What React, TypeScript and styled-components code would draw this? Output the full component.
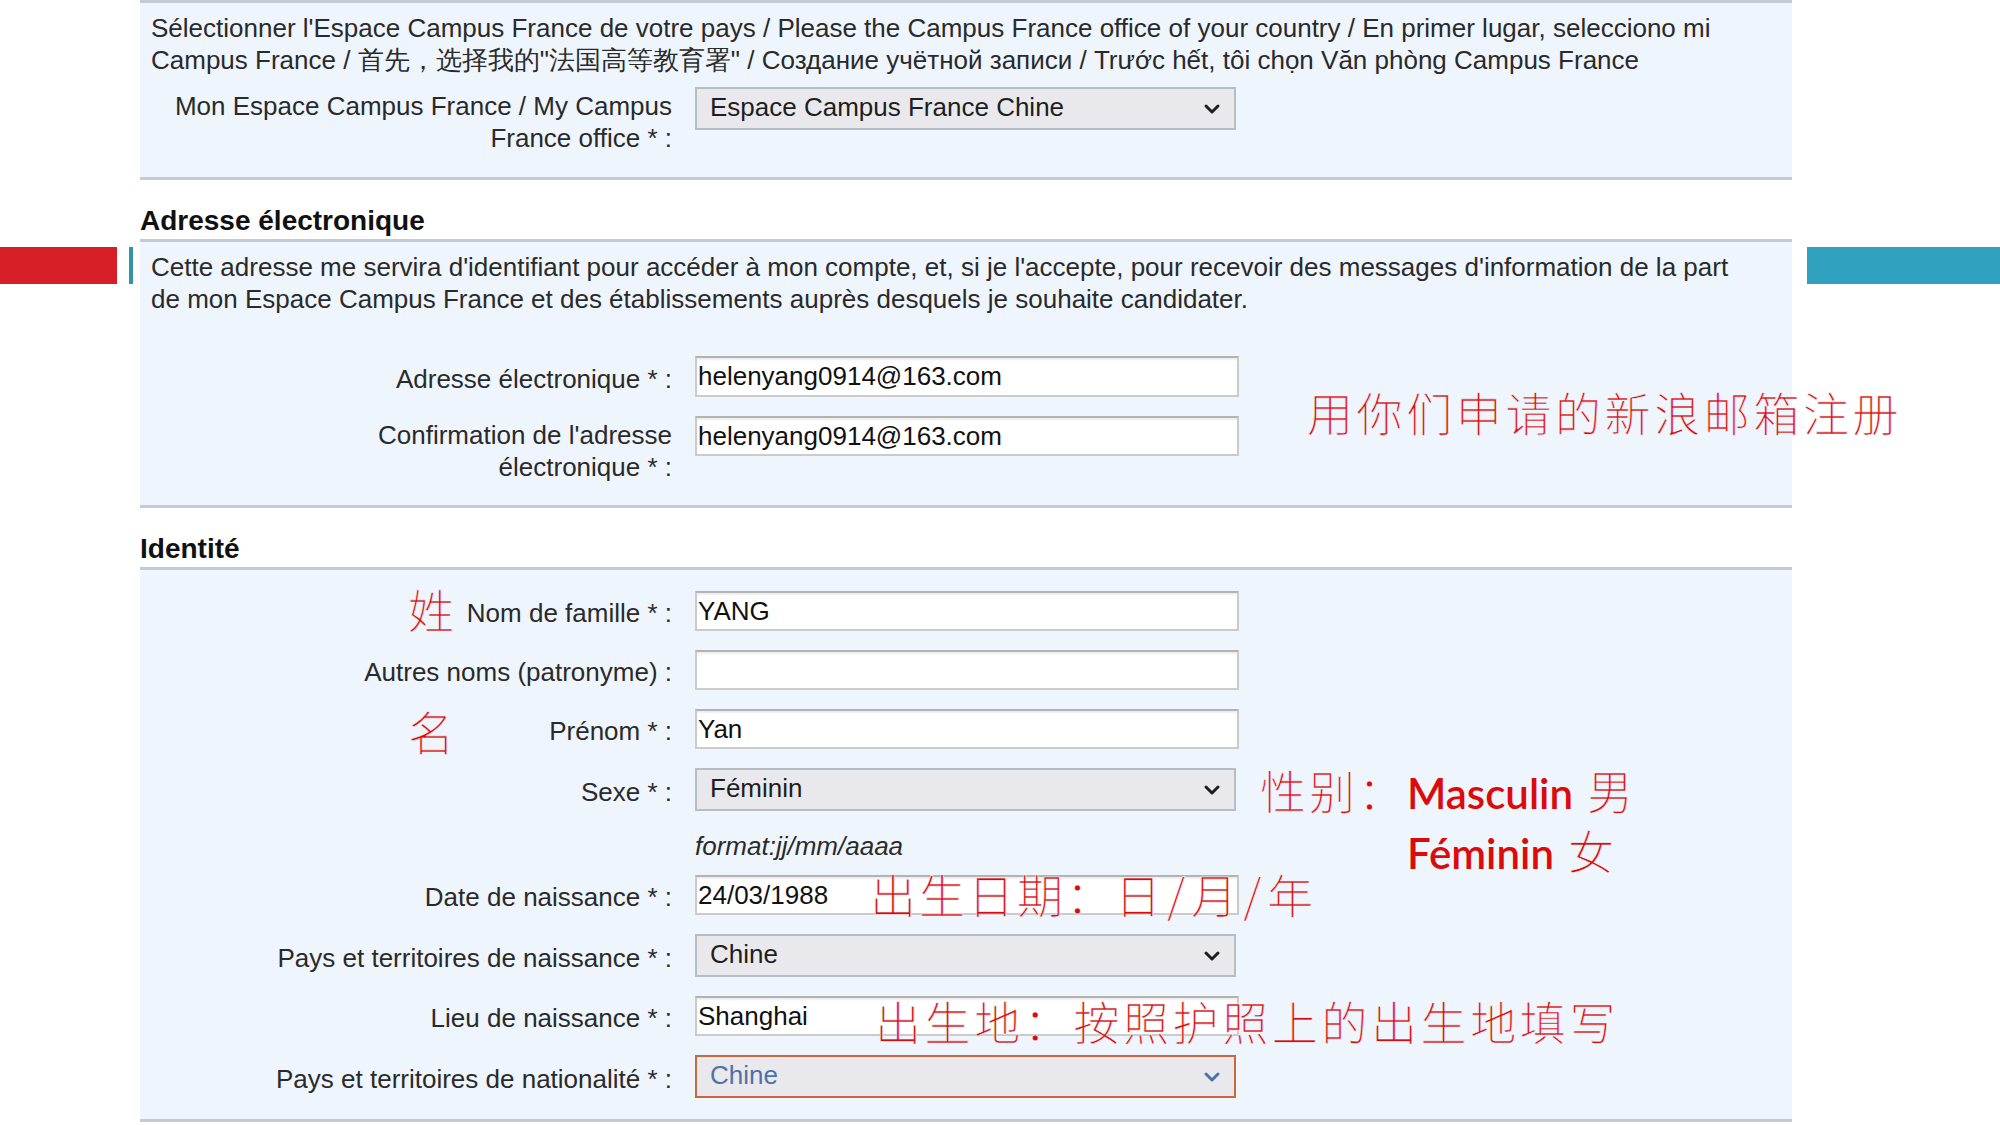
import React from 'react'
import styled, { createGlobalStyle } from 'styled-components'

const GlobalStyle = createGlobalStyle`
  html, body {
    margin: 0;
    padding: 0;
    background: #ffffff;
  }
  body {
    font-family: "Liberation Sans", Arial, sans-serif;
  }
`

const Slide = styled.div`
  position: relative;
  width: 2000px;
  height: 1125px;
  overflow: hidden;
  background: #ffffff;
`

const Form = styled.div`
  width: 1652px;
  margin-left: 140px;
  color: #2a2a2a;
  font-size: 26px;
  line-height: 32px;
`

const Panel = styled.div<{ $pt: number; $pb: number }>`
  background: #eef5fd;
  border-top: 3px solid #c3cbd5;
  border-bottom: 3px solid #c3cbd5;
  padding: ${p => p.$pt}px 0 ${p => p.$pb}px;
  display: flex;
  flex-direction: column;
`

const Intro = styled.p`
  margin: 0 0 0 11px;
  white-space: nowrap;
`

const Heading = styled.h2`
  margin: 0;
  padding: 25px 0 2px;
  font-size: 28px;
  line-height: 32px;
  font-weight: bold;
  color: #111;
`

const Row = styled.div<{ $mt?: number; $multi?: boolean }>`
  display: grid;
  grid-template-columns: 532px 1fr;
  column-gap: 23px;
  align-items: ${p => (p.$multi ? 'start' : 'center')};
  margin-top: ${p => p.$mt ?? 19}px;
`

const Label = styled.label<{ $multi?: boolean }>`
  text-align: right;
  padding-top: ${p => (p.$multi ? 3 : 4)}px;
  color: #2a2a2a;
`

const TextInput = styled.input<{ $h?: number }>`
  box-sizing: border-box;
  width: 544px;
  height: ${p => p.$h ?? 40}px;
  margin: 0;
  padding: 0 0 0 1px;
  border: 2px solid #cbcbcb;
  border-top-color: #b3b3b3;
  box-shadow: inset 0 2px 2px rgba(0, 0, 0, 0.07);
  background: #ffffff;
  font-family: "Liberation Sans", Arial, sans-serif;
  font-size: 26px;
  color: #111;
  outline: none;
`

const SelectBox = styled.div<{ $accent?: boolean }>`
  box-sizing: border-box;
  width: 541px;
  height: 43px;
  display: flex;
  align-items: center;
  justify-content: space-between;
  padding: 0 12px 3px 13px;
  background: #e9e9ed;
  border: 2px solid ${p => (p.$accent ? '#c8683e' : '#b7bdc5')};
  color: ${p => (p.$accent ? '#4d72a8' : '#1e1e1e')};
  font-size: 26px;

  svg {
    margin-top: 3px;
  }
`

const Hint = styled.div`
  grid-column: 2;
  font-style: italic;
  color: #2a2a2a;
`

const Annotation = styled.div<{ $x: number; $y: number; $ls?: number }>`
  position: absolute;
  left: ${p => p.$x}px;
  top: ${p => p.$y}px;
  transform: translateY(-50%);
  color: #dc0b0b;
  font-family: "Noto Sans CJK SC", "Noto Sans CJK JP", sans-serif;
  font-weight: 200;
  font-size: 46px;
  line-height: 1;
  letter-spacing: ${p => p.$ls ?? 3}px;
  white-space: nowrap;
  -webkit-text-stroke: 0.6px #eef5fd;
`

const Slash = styled.span`
  margin: 0 3px;
`

const Latin = styled.span`
  font-family: Lato, "Liberation Sans", sans-serif;
  font-weight: 600;
  font-size: 42px;
  letter-spacing: 0;
  margin-right: 14px;
  -webkit-text-stroke: 0;
`

const Bar = styled.div<{ $x: number; $w: number; $color: string }>`
  position: absolute;
  left: ${p => p.$x}px;
  top: 247px;
  width: ${p => p.$w}px;
  height: 37px;
  background: ${p => p.$color};
`

const Chevron: React.FC<{ color?: string }> = ({ color = '#1e1e1e' }) => (
  <svg width="20" height="14" viewBox="0 0 20 14">
    <path d="M4 4 L10 10 L16 4" fill="none" stroke={color} strokeWidth="3" strokeLinecap="round" strokeLinejoin="round" />
  </svg>
)

const Select: React.FC<{ value: string; accent?: boolean }> = ({ value, accent }) => (
  <SelectBox $accent={accent}>
    <span>{value}</span>
    <Chevron color={accent ? '#4d72a8' : '#1e1e1e'} />
  </SelectBox>
)

const Field: React.FC<{ label: React.ReactNode; multi?: boolean; mt?: number; children: React.ReactNode }> = ({ label, multi, mt, children }) => (
  <Row $multi={multi} $mt={mt}>
    <Label $multi={multi}>{label}</Label>
    <div>{children}</div>
  </Row>
)

export default function App() {
  return (
    <Slide>
      <GlobalStyle />
      <Form>
        <Panel $pt={9} $pb={23}>
          <Intro>
            Sélectionner l'Espace Campus France de votre pays / Please the Campus France office of your country / En primer lugar, selecciono mi
            <br />
            Campus France / 首先，选择我的"法国高等教育署" / Создание учётной записи / Trước hết, tôi chọn Văn phòng Campus France
          </Intro>
          <Field
            multi
            mt={11}
            label={<>Mon Espace Campus France / My Campus<br />France office * :</>}
          >
            <Select value="Espace Campus France Chine" />
          </Field>
        </Panel>

        <Heading>Adresse électronique</Heading>
        <Panel $pt={9} $pb={22}>
          <Intro>
            Cette adresse me servira d'identifiant pour accéder à mon compte, et, si je l'accepte, pour recevoir des messages d'information de la part
            <br />
            de mon Espace Campus France et des établissements auprès desquels je souhaite candidater.
          </Intro>
          <Field mt={41} label="Adresse électronique * :">
            <TextInput readOnly defaultValue="helenyang0914@163.com" $h={41} />
          </Field>
          <Field multi label={<>Confirmation de l'adresse<br />électronique * :</>}>
            <TextInput readOnly defaultValue="helenyang0914@163.com" />
          </Field>
        </Panel>

        <Heading>Identité</Heading>
        <Panel $pt={21} $pb={21}>
          <Field mt={0} label="Nom de famille * :">
            <TextInput readOnly defaultValue="YANG" />
          </Field>
          <Field label="Autres noms (patronyme) :">
            <TextInput readOnly defaultValue="" />
          </Field>
          <Field label="Prénom * :">
            <TextInput readOnly defaultValue="Yan" />
          </Field>
          <Field label="Sexe * :">
            <Select value="Féminin" />
          </Field>
          <Row $mt={19}>
            <Hint>format:jj/mm/aaaa</Hint>
          </Row>
          <Field mt={13} label="Date de naissance * :">
            <TextInput readOnly defaultValue="24/03/1988" />
          </Field>
          <Field label="Pays et territoires de naissance * :">
            <Select value="Chine" />
          </Field>
          <Field label="Lieu de naissance * :">
            <TextInput readOnly defaultValue="Shanghai" />
          </Field>
          <Field label="Pays et territoires de nationalité * :">
            <Select value="Chine" accent />
          </Field>
        </Panel>
      </Form>

      <Bar $x={0} $w={117} $color="#d71f28" />
      <Bar $x={129} $w={4} $color="#2f95aa" />
      <Bar $x={1807} $w={193} $color="#2fa0bd" />

      <Annotation $x={1307} $y={411} $ls={3.6}>用你们申请的新浪邮箱注册</Annotation>
      <Annotation $x={408} $y={608}>姓</Annotation>
      <Annotation $x={408} $y={730}>名</Annotation>
      <Annotation $x={1260} $y={790}>
        性别：<Latin>Masculin</Latin>男
      </Annotation>
      <Annotation $x={1407} $y={850}>
        <Latin>Féminin</Latin>女
      </Annotation>
      <Annotation $x={870} $y={893}>
        出生日期：日<Slash>/</Slash>月<Slash>/</Slash>年
      </Annotation>
      <Annotation $x={875} $y={1020} $ls={3.6}>出生地：按照护照上的出生地填写</Annotation>
    </Slide>
  )
}
